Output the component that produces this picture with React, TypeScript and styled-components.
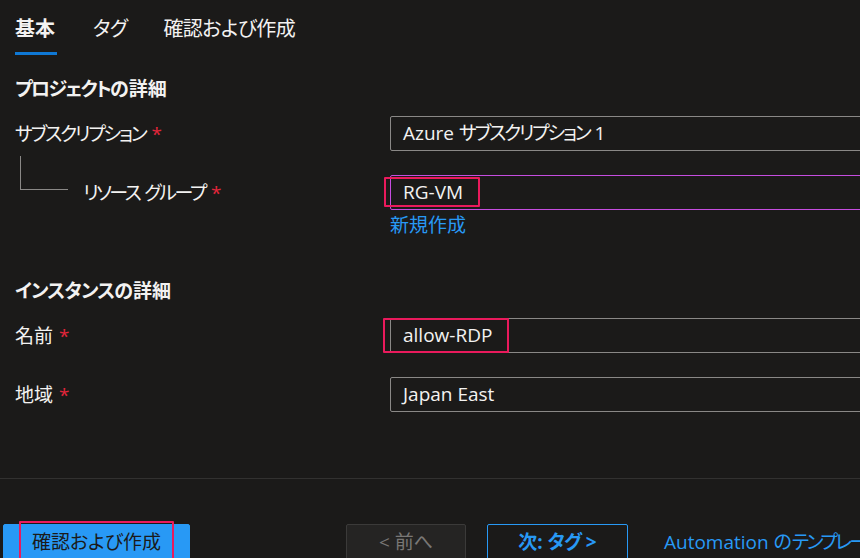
import React from "react";
import styled, { createGlobalStyle } from "styled-components";

const Global = createGlobalStyle`
  html, body { margin: 0; padding: 0; background: #1b1a19; }
  body {
    font-family: "Open Sans", "Noto Sans CJK JP", sans-serif;
    font-feature-settings: "palt";
    color: #f3f2f1;
  }
  * { box-sizing: border-box; }
`;

const Page = styled.div`
  width: 860px;
  height: 558px;
  overflow: hidden;
  background: #1b1a19;
  display: flex;
  flex-direction: column;
`;

const Content = styled.div`
  padding-left: 15px;
  display: flex;
  flex-direction: column;
  flex: 1;
`;

const TabBar = styled.div`
  display: flex;
  gap: 36px;
  height: 55px;
`;

const Tab = styled.div<{ $active?: boolean }>`
  height: 55px;
  padding-top: 17px;
  font-size: 20px;
  line-height: 24px;
  font-weight: ${(p) => (p.$active ? 700 : 400)};
  color: #f3f2f1;
  border-bottom: 3px solid ${(p) => (p.$active ? "#0f78d4" : "transparent")};
  padding-right: ${(p) => (p.$active ? "2px" : "0")};
  letter-spacing: ${(p) => (p.$active ? "0" : "-0.6px")};
`;

const Kana = styled.span<{ $ls: number }>`
  letter-spacing: ${(p) => p.$ls}px;
`;

const SectionTitle = styled.h2<{ $top: number }>`
  margin: ${(p) => p.$top}px 0 0 0;
  font-size: 19px;
  line-height: 24px;
  font-weight: 700;
  color: #f3f2f1;
`;

const Row = styled.div<{ $top: number }>`
  display: grid;
  grid-template-columns: 375px 1fr;
  align-items: center;
  height: 35px;
  margin-top: ${(p) => p.$top}px;
`;

const LabelCell = styled.div`
  display: flex;
  align-items: center;
  height: 35px;
`;

const Label = styled.span<{ $indent?: number }>`
  font-size: 19px;
  line-height: 24px;
  margin-left: ${(p) => p.$indent ?? 0}px;
  white-space: nowrap;
`;

const Required = styled.span`
  color: #e3263b;
  margin-left: 6px;
  letter-spacing: 0;
`;

const Connector = styled.div`
  align-self: flex-start;
  margin-top: -19px;
  margin-left: 5px;
  width: 48px;
  height: 34px;
  border-left: 1px solid #8a8886;
  border-bottom: 1px solid #8a8886;
  flex-shrink: 0;
`;

const FieldWrap = styled.div`
  position: relative;
  height: 35px;
`;

const Field = styled.div<{ $focus?: boolean }>`
  width: 520px;
  height: 35px;
  border: 1px solid ${(p) => (p.$focus ? "#c54ddf" : "#8a8886")};
  border-radius: 2px;
  padding-left: 12px;
  font-size: 19px;
  line-height: 33px;
  color: #f3f2f1;
  white-space: nowrap;
`;

const Highlight = styled.span<{ $l: number; $t: number; $w: number; $h: number }>`
  position: absolute;
  left: ${(p) => p.$l}px;
  top: ${(p) => p.$t}px;
  width: ${(p) => p.$w}px;
  height: ${(p) => p.$h}px;
  border: 2px solid #ea1a5c;
  border-radius: 1px;
  pointer-events: none;
`;

const LinkRow = styled.div`
  display: grid;
  grid-template-columns: 375px 1fr;
  margin-top: 4px;
`;

const Link = styled.a`
  font-size: 19px;
  line-height: 22px;
  color: #2899f5;
  text-decoration: none;
  white-space: nowrap;
`;

const Separator = styled.div`
  height: 1px;
  background: #323130;
  flex-shrink: 0;
`;

const Footer = styled.div`
  display: flex;
  align-items: flex-start;
  height: 79px;
  padding: 45px 0 0 3px;
  flex-shrink: 0;
`;

const ButtonWrap = styled.div`
  position: relative;
`;

const Button = styled.button<{ $variant: "primary" | "disabled" | "outline"; $w: number; $ml: number }>`
  width: ${(p) => p.$w}px;
  height: 36px;
  margin-left: ${(p) => p.$ml}px;
  border-radius: 2px;
  font-family: "Open Sans", "Noto Sans CJK JP", sans-serif;
  font-feature-settings: "palt";
  font-size: 19px;
  line-height: 22px;
  padding: 0;
  text-align: center;
  white-space: nowrap;
  flex-shrink: 0;
  ${(p) =>
    p.$variant === "primary"
      ? `background:#2899f5; border:1px solid #2899f5; color:#1b1a19;`
      : p.$variant === "disabled"
      ? `background:#252423; border:1px solid #3b3a39; color:#797775;`
      : `background:transparent; border:1px solid #2899f5; color:#2899f5; font-weight:700;`}
`;

const FooterLink = styled(Link)`
  margin-left: 36px;
  line-height: 36px;
`;

export default function App() {
  return (
    <>
      <Global />
      <Page>
        <Content>
          <TabBar>
            <Tab $active>基本</Tab>
            <Tab>タグ</Tab>
            <Tab>確認および作成</Tab>
          </TabBar>

          <SectionTitle $top={22}>
            <Kana $ls={-1.7}>プロジェクト</Kana>の詳細
          </SectionTitle>

          <Row $top={15}>
            <LabelCell>
              <Label>
                <Kana $ls={-2.2}>サブスクリプション</Kana>
                <Required>*</Required>
              </Label>
            </LabelCell>
            <FieldWrap>
              <Field>
                Azure <Kana $ls={-2.2}>サブスクリプション</Kana>{"  "}1
              </Field>
            </FieldWrap>
          </Row>

          <Row $top={24}>
            <LabelCell>
              <Connector />
              <Label $indent={15}>
                <Kana $ls={-2.4}>リソース</Kana> <Kana $ls={-2.4}>グループ</Kana>
                <Required>*</Required>
              </Label>
            </LabelCell>
            <FieldWrap>
              <Field $focus>RG-VM</Field>
              <Highlight $l={-6} $t={2} $w={96} $h={30} />
            </FieldWrap>
          </Row>

          <LinkRow>
            <span />
            <Link href="#">新規作成</Link>
          </LinkRow>

          <SectionTitle $top={43}>
            <Kana $ls={-0.8}>インスタンス</Kana>の詳細
          </SectionTitle>

          <Row $top={15}>
            <LabelCell>
              <Label>
                名前<Required>*</Required>
              </Label>
            </LabelCell>
            <FieldWrap>
              <Field>allow-RDP</Field>
              <Highlight $l={-7} $t={0} $w={126} $h={35} />
            </FieldWrap>
          </Row>

          <Row $top={24}>
            <LabelCell>
              <Label>
                地域<Required>*</Required>
              </Label>
            </LabelCell>
            <FieldWrap>
              <Field>Japan East</Field>
            </FieldWrap>
          </Row>
        </Content>

        <Separator />

        <Footer>
          <ButtonWrap>
            <Button $variant="primary" $w={187} $ml={0}>
              確認および作成
            </Button>
            <Highlight $l={16} $t={-3} $w={155} $h={42} />
          </ButtonWrap>
          <Button $variant="disabled" $w={120} $ml={156}>
            &lt; 前へ
          </Button>
          <Button $variant="outline" $w={141} $ml={21}>
            次: <Kana $ls={-1}>タグ</Kana> &gt;
          </Button>
          <FooterLink href="#">
            Automation の<Kana $ls={-2.6}>テンプレート</Kana>をダウンロードする
          </FooterLink>
        </Footer>
      </Page>
    </>
  );
}
